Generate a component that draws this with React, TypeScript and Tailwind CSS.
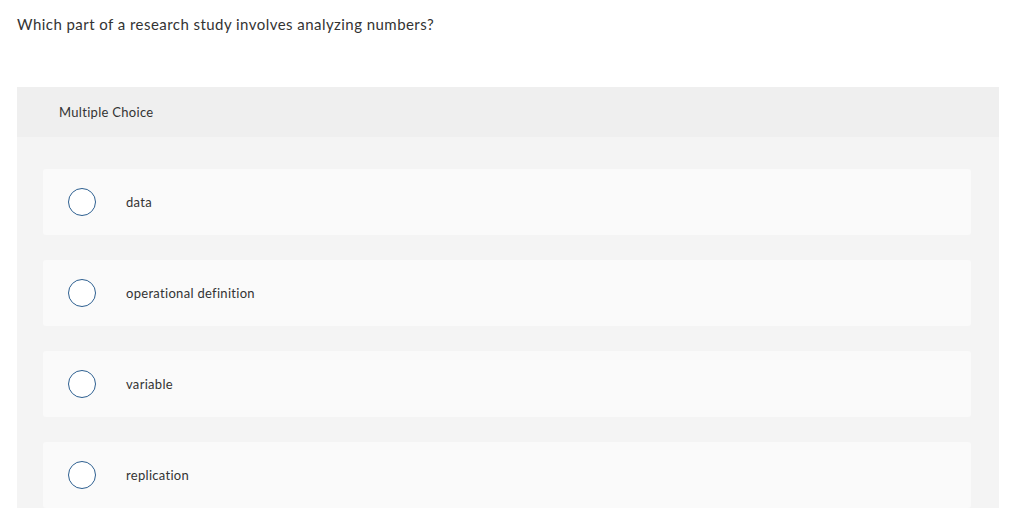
const options = ['data', 'operational definition', 'variable', 'replication']

export default function App() {
  return (
    <div className="min-h-screen bg-white px-[17px] pt-[14px] font-['Lato','Open_Sans',sans-serif] text-[#333]">
      <p className="text-[15px] leading-[20px] tracking-[0.45px]">
        Which part of a research study involves analyzing numbers?
      </p>

      <div className="mt-[53px] w-[982px] bg-[#f4f4f4]">
        <div className="flex h-[50px] items-center bg-[#efefef] pt-[2px] pl-[42px] text-[13px] tracking-[0.3px]">
          Multiple Choice
        </div>

        <div className="flex flex-col gap-[25px] pt-[32px] pr-[28px] pb-[32px] pl-[26px]">
          {options.map((opt) => (
            <label
              key={opt}
              className="flex h-[66px] items-center rounded-[3px] bg-[#fafafa] pl-[25px]"
            >
              <span className="h-[28px] w-[28px] shrink-0 rounded-full border-[1.5px] border-[#2d5f90] bg-white" />
              <span className="ml-[30px] pt-[2px] text-[13px] tracking-[0.3px]">{opt}</span>
            </label>
          ))}
        </div>
      </div>
    </div>
  )
}
